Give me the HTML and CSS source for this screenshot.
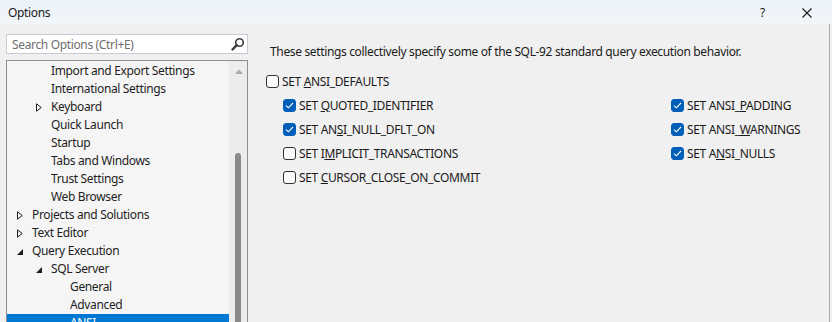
FILE: index.html
```html
<!DOCTYPE html>
<html>
<head>
<meta charset="utf-8">
<title>Options</title>
<link rel="stylesheet" href="styles.css">
</head>
<body>
<div class="window">
  <div class="titlebar">
    <span class="title">Options</span>
    <span class="help">?</span>
    <span class="close">
      <svg width="10" height="10" viewBox="0 0 10 10"><path d="M0.5 0.5 L9.5 9.5 M9.5 0.5 L0.5 9.5" stroke="#1a1a1a" stroke-width="1.1" fill="none"/></svg>
    </span>
  </div>
  <div class="main">
    <div class="left">
      <div class="search">
        <span class="placeholder">Search Options (Ctrl+E)</span>
        <svg class="search-icon" width="14" height="14" viewBox="0 0 14 14">
          <circle cx="8.5" cy="5.5" r="3.8" stroke="#3c3c3c" stroke-width="1.6" fill="none"/>
          <path d="M5.8 8.2 L1.5 12.5" stroke="#3c3c3c" stroke-width="2.4" stroke-linecap="round"/>
        </svg>
      </div>
      <div class="tree">
        <div class="rows">
          <div class="row l2"><span class="arrow"></span><span>Import and Export Settings</span></div>
          <div class="row l2"><span class="arrow"></span><span>International Settings</span></div>
          <div class="row l2"><span class="arrow"><svg width="6" height="9" viewBox="0 0 6 9"><path d="M0.5 0.8 L5.2 4.5 L0.5 8.2 Z" fill="none" stroke="#1e1e1e" stroke-width="1"/></svg></span><span>Keyboard</span></div>
          <div class="row l2"><span class="arrow"></span><span>Quick Launch</span></div>
          <div class="row l2"><span class="arrow"></span><span>Startup</span></div>
          <div class="row l2"><span class="arrow"></span><span>Tabs and Windows</span></div>
          <div class="row l2"><span class="arrow"></span><span>Trust Settings</span></div>
          <div class="row l2"><span class="arrow"></span><span>Web Browser</span></div>
          <div class="row l1"><span class="arrow"><svg width="6" height="9" viewBox="0 0 6 9"><path d="M0.5 0.8 L5.2 4.5 L0.5 8.2 Z" fill="none" stroke="#1e1e1e" stroke-width="1"/></svg></span><span>Projects and Solutions</span></div>
          <div class="row l1"><span class="arrow"><svg width="6" height="9" viewBox="0 0 6 9"><path d="M0.5 0.8 L5.2 4.5 L0.5 8.2 Z" fill="none" stroke="#1e1e1e" stroke-width="1"/></svg></span><span>Text Editor</span></div>
          <div class="row l1"><span class="arrow exp"><svg width="6" height="6" viewBox="0 0 6 6"><path d="M6 0 L6 6 L0 6 Z" fill="#1e1e1e"/></svg></span><span>Query Execution</span></div>
          <div class="row l2"><span class="arrow exp"><svg width="6" height="6" viewBox="0 0 6 6"><path d="M6 0 L6 6 L0 6 Z" fill="#1e1e1e"/></svg></span><span>SQL Server</span></div>
          <div class="row l3"><span class="arrow"></span><span>General</span></div>
          <div class="row l3"><span class="arrow"></span><span>Advanced</span></div>
          <div class="row l3 selected"><span class="arrow"></span><span>ANSI</span></div>
        </div>
        <div class="scrollbar">
          <svg class="up" width="8" height="5" viewBox="0 0 8 5"><path d="M0 5 L4 0.5 L8 5 Z" fill="#a8a8a8"/></svg>
          <div class="thumb"></div>
        </div>
      </div>
    </div>
    <div class="right">
      <p class="desc">These settings collectively specify some of the SQL-92 standard query execution behavior.</p>
      <label class="check"><span class="box"></span><span>SET <u>A</u>NSI_DEFAULTS</span></label>
      <div class="group">
        <label class="check"><span class="box on"><svg width="9" height="7" viewBox="0 0 9 7"><path d="M1 3.6 L3.4 5.8 L8 1" stroke="#fff" stroke-width="1.1" fill="none"/></svg></span><span>SET <u>Q</u>UOTED_IDENTIFIER</span></label>
        <label class="check"><span class="box on"><svg width="9" height="7" viewBox="0 0 9 7"><path d="M1 3.6 L3.4 5.8 L8 1" stroke="#fff" stroke-width="1.1" fill="none"/></svg></span><span>SET ANSI_<u>P</u>ADDING</span></label>
        <label class="check"><span class="box on"><svg width="9" height="7" viewBox="0 0 9 7"><path d="M1 3.6 L3.4 5.8 L8 1" stroke="#fff" stroke-width="1.1" fill="none"/></svg></span><span>SET AN<u>S</u>I_NULL_DFLT_ON</span></label>
        <label class="check"><span class="box on"><svg width="9" height="7" viewBox="0 0 9 7"><path d="M1 3.6 L3.4 5.8 L8 1" stroke="#fff" stroke-width="1.1" fill="none"/></svg></span><span>SET ANSI_<u>W</u>ARNINGS</span></label>
        <label class="check"><span class="box"></span><span>SET I<u>M</u>PLICIT_TRANSACTIONS</span></label>
        <label class="check"><span class="box on"><svg width="9" height="7" viewBox="0 0 9 7"><path d="M1 3.6 L3.4 5.8 L8 1" stroke="#fff" stroke-width="1.1" fill="none"/></svg></span><span>SET A<u>N</u>SI_NULLS</span></label>
        <label class="check"><span class="box"></span><span>SET <u>C</u>URSOR_CLOSE_ON_COMMIT</span></label>
      </div>
    </div>
  </div>
</div>
</body>
</html>
```
FILE: styles.css
```css
html, body {
  margin: 0;
  padding: 0;
  background: #f0f0f0;
  overflow: hidden;
}
body {
  font-family: "Noto Sans", "Open Sans", "DejaVu Sans", sans-serif;
  font-size: 12px;
  letter-spacing: -0.35px;
  color: #1a1a1a;
}
.window {
  width: 832px;
  height: 322px;
  display: flex;
  flex-direction: column;
  overflow: hidden;
}
.titlebar {
  height: 24px;
  flex: none;
  background: linear-gradient(#ebf2f8, #f1f6fa);
  display: flex;
  align-items: center;
}
.title {
  padding-left: 8px;
  font-size: 12px;
  color: #1a1a1a;
  flex: 1;
}
.help {
  font-size: 12px;
  width: 14px;
  margin-right: 28px;
  padding-left: 1px;
}
.close {
  width: 10px;
  height: 10px;
  display: flex;
  margin-right: 20px;
  margin-top: 1px;
}
.main {
  flex: 1;
  display: flex;
  min-height: 0;
  border-right: 1px solid #a8a8a8;
  margin-right: 2px;
}
.left {
  width: 242px;
  flex: none;
  padding-left: 6px;
  padding-top: 10px;
  display: flex;
  flex-direction: column;
  gap: 6px;
}
.search {
  height: 18px;
  border: 1px solid #c8cad6;
  background: #ffffff;
  display: flex;
  align-items: center;
  padding-left: 5px;
  padding-right: 2px;
}
.placeholder {
  flex: 1;
  color: #6e6e6e;
}
.search-icon {
  display: block;
}
.tree {
  flex: 1;
  border: 1px solid #8f8f99;
  border-bottom: none;
  background: #f5f5f5;
  display: flex;
  min-height: 0;
}
.rows {
  width: 222px;
  padding-top: 1px;
}
.row {
  height: 18px;
  line-height: 18px;
  display: flex;
  align-items: center;
  white-space: nowrap;
  color: #1e1e1e;
}
.row.l1 { padding-left: 10px; }
.row.l2 { padding-left: 29px; }
.row.l3 { padding-left: 48px; }
.arrow {
  width: 15px;
  flex: none;
  display: flex;
  align-items: center;
}
.arrow.exp {
  margin-top: 2px;
}
.arrow svg { display: block; }
.row.selected {
  background: #0078d4;
  color: #ffffff;
}
.scrollbar {
  width: 18px;
  flex: none;
  background: #ececec;
  display: flex;
  flex-direction: column;
  align-items: center;
}
.up {
  display: block;
  margin-top: 8px;
  margin-left: 1px;
}
.thumb {
  width: 6px;
  margin-top: 79px;
  flex: 1;
  background: #8a8a8a;
  border-radius: 3px 3px 0 0;
}
.right {
  flex: 1;
  padding-left: 18px;
  padding-top: 20px;
}
.desc {
  margin: 0 0 12px 4px;
  line-height: 16px;
}
.check {
  display: flex;
  align-items: center;
  height: 18px;
  white-space: nowrap;
  color: #1a1a1a;
}
.check u {
  text-underline-offset: 1px;
}
.box {
  width: 11px;
  height: 11px;
  border: 1px solid #333333;
  border-radius: 3px;
  margin-right: 3px;
  display: flex;
  align-items: center;
  justify-content: center;
  flex: none;
  background: #fbfbfb;
}
.box.on {
  background: #005fb8;
  border-color: #005fb8;
}
.box svg { display: block; }
.group {
  margin-top: 6px;
  padding-left: 17px;
  display: grid;
  grid-template-columns: 388px auto;
  row-gap: 6px;
}
```
